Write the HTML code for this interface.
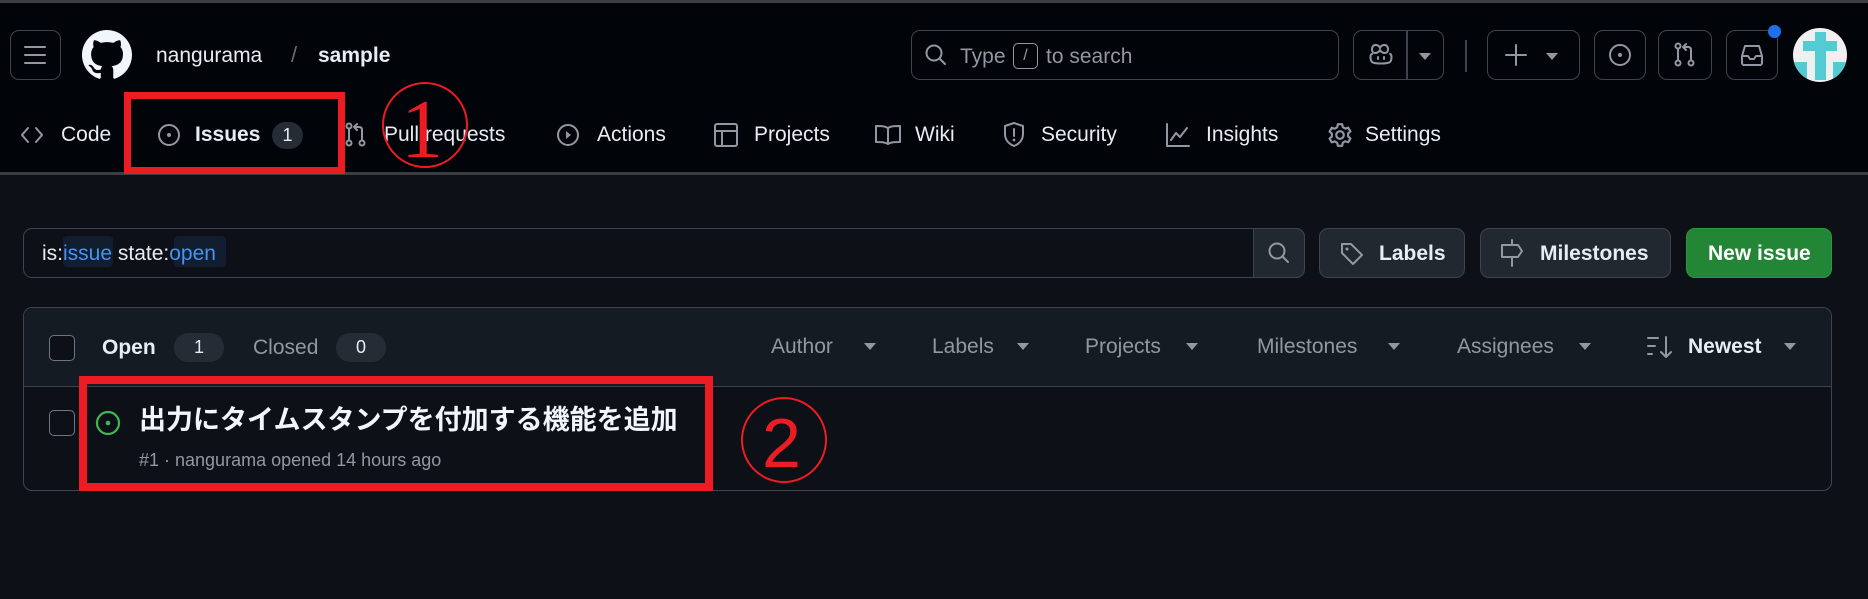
<!DOCTYPE html>
<html><head><meta charset="utf-8">
<style>
*{box-sizing:border-box;margin:0;padding:0}
body{width:1868px;height:599px;background:#0d1117;position:relative;overflow:hidden;font-family:"Liberation Sans","Noto Sans CJK JP",sans-serif;color:#e6edf3}
.a{position:absolute}
.hdr{left:0;top:0;width:1868px;height:173px;background:#010409;border-top:3px solid #3a3d42}
.btn{position:absolute;border:1.5px solid #3d444d;border-radius:9px}
.t{position:absolute;white-space:nowrap;line-height:1}
.nav{font-size:21px;color:#e6edf3;top:124px}
svg{position:absolute;overflow:visible}
.ic{fill:none;stroke:#9198a1;stroke-width:2;stroke-linecap:round;stroke-linejoin:round}
.badge{position:absolute;background:#262c36;border-radius:14px;color:#e6edf3;font-size:18px;text-align:center}
.f{font-size:21px;color:#9198a1;top:336px}
.caret{position:absolute;width:0;height:0;border-left:6px solid transparent;border-right:6px solid transparent;border-top:7px solid #9198a1}
</style></head><body>
<div class="a hdr"></div>
<div class="btn" style="left:10px;top:30px;width:51px;height:50px"></div>
<svg style="left:24px;top:44px" width="24" height="22"><g class="ic" stroke="#9198a1"><path d="M1 3h20M1 11h20M1 19h20"/></g></svg>
<svg style="left:82px;top:30px" width="50" height="50" viewBox="0 0 16 16"><path fill="#f0f6fc" d="M8 0C3.58 0 0 3.58 0 8c0 3.54 2.290 6.53 5.47 7.59.4.07.55-.17.55-.38 0-.19-.01-.82-.01-1.49-2.01.37-2.53-.49-2.690-.94-.09-.23-.48-.94-.82-1.13-.28-.15-.68-.52-.01-.53.63-.01 1.08.58 1.23.82.72 1.21 1.87.87 2.33.66.07-.52.28-.87.51-1.07-1.78-.2-3.64-.89-3.64-3.95 0-.87.31-1.59.82-2.15-.08-.2-.36-1.02.08-2.12 0 0 .67-.21 2.2.82.64-.18 1.32-.27 2-.27.68 0 1.36.09 2 .27 1.53-1.04 2.2-.82 2.2-.82.44 1.1.16 1.92.08 2.12.51.56.82 1.27.82 2.15 0 3.07-1.87 3.75-3.65 3.95.29.25.54.73.54 1.48 0 1.07-.01 1.93-.01 2.2 0 .21.15.46.55.38A8.013 8.013 0 0016 8c0-4.42-3.58-8-8-8z"/></svg>
<div class="t" style="left:156px;top:45px;font-size:21px">nangurama</div>
<div class="t" style="left:291px;top:44px;font-size:22px;color:#656c76">/</div>
<div class="t" style="left:318px;top:45px;font-size:21px;font-weight:bold">sample</div>
<div class="btn" style="left:911px;top:30px;width:428px;height:50px"></div>
<svg style="left:925px;top:44px" width="22" height="22"><g class="ic"><circle cx="9" cy="9" r="7.5"/><path d="M14.5 14.5L20 20"/></g></svg>
<div class="t" style="left:960px;top:46px;font-size:21px;color:#9198a1">Type</div>
<div class="a" style="left:1013px;top:43px;width:25px;height:26px;border:1.5px solid #9198a1;border-radius:5px;color:#9198a1;font-size:16px;text-align:center;line-height:23px">/</div>
<div class="t" style="left:1046px;top:46px;font-size:21px;color:#9198a1">to search</div>
<div class="btn" style="left:1353px;top:30px;width:91px;height:50px"></div>
<div class="a" style="left:1406px;top:31px;width:1.5px;height:48px;background:#3d444d"></div>
<svg style="left:1368px;top:42px" width="26" height="24"><g class="ic" stroke-width="2.2"><path d="M4 12c-2 0-2 6 0 8 3 2 15 2 18 0 2-2 2-8 0-8M7 11c-3 0-4-4-2-7 2-2 6-1 7 2 1-3 5-4 7-2 2 3 1 7-2 7-2 0-4-1-5-3-1 2-3 3-5 3z"/><path d="M10 15v2M16 15v2"/></g></svg>
<div class="caret" style="left:1419px;top:53px;border-top-color:#9198a1"></div>
<div class="a" style="left:1465px;top:40px;width:2px;height:32px;background:#3d444d"></div>
<div class="btn" style="left:1487px;top:30px;width:93px;height:50px"></div>
<svg style="left:1505px;top:44px" width="22" height="22"><g class="ic" stroke-width="2.4"><path d="M11 1v20M1 11h20"/></g></svg>
<div class="caret" style="left:1546px;top:53px"></div>
<div class="btn" style="left:1594px;top:30px;width:52px;height:50px"></div>
<svg style="left:1608px;top:43px" width="24" height="24"><g class="ic"><circle cx="12" cy="12" r="10"/></g><circle cx="12" cy="12" r="2" fill="#9198a1"/></svg>
<div class="btn" style="left:1658px;top:30px;width:54px;height:50px"></div>
<svg style="left:1674px;top:42px" width="24" height="26"><g class="ic"><circle cx="4" cy="21" r="2.5"/><circle cx="4" cy="4" r="2.5"/><circle cx="17" cy="21" r="2.5"/><path d="M4 7v11M17 18V8c0-2-1-3-3-3h-4M12 2l-3 3 3 3"/></g></svg>
<div class="btn" style="left:1726px;top:30px;width:52px;height:50px"></div>
<svg style="left:1740px;top:44px" width="24" height="22"><g class="ic"><path d="M2 12l3-10h14l3 10v7c0 1-1 2-2 2H4c-1 0-2-1-2-2zM2 12h6l2 3h4l2-3h6"/></g></svg>
<div class="a" style="left:1768px;top:25px;width:13px;height:13px;border-radius:50%;background:#1f6feb"></div>
<div class="a" style="left:1793px;top:28px;width:54px;height:54px;border-radius:50%;background:#f0f0f0;overflow:hidden">
<div class="a" style="left:22px;top:4px;width:11px;height:48px;background:#52cbd3"></div>
<div class="a" style="left:10px;top:13px;width:34px;height:10px;background:#52cbd3"></div>
<div class="a" style="left:0;top:34px;width:14px;height:20px;background:#52cbd3"></div>
<div class="a" style="left:40px;top:34px;width:14px;height:20px;background:#52cbd3"></div>
</div>
<svg style="left:21px;top:125px" width="22" height="20"><g class="ic"><path d="M7 3L1 10l6 7M15 3l6 7-6 7"/></g></svg>
<div class="t nav" style="left:61px">Code</div>
<svg style="left:157px;top:123px" width="24" height="24"><g class="ic"><circle cx="12" cy="12" r="10"/></g><circle cx="12" cy="12" r="2" fill="#9198a1"/></svg>
<div class="t nav" style="left:195px;font-weight:bold">Issues</div>
<div class="badge" style="left:272px;top:122px;width:31px;height:27px;line-height:27px">1</div>
<svg style="left:345px;top:122px" width="24" height="26"><g class="ic"><circle cx="4" cy="21" r="2.5"/><circle cx="4" cy="4" r="2.5"/><circle cx="17" cy="21" r="2.5"/><path d="M4 7v11M17 18V8c0-2-1-3-3-3h-4M12 2l-3 3 3 3"/></g></svg>
<div class="t nav" style="left:384px">Pull requests</div>
<svg style="left:556px;top:123px" width="24" height="24"><g class="ic"><circle cx="12" cy="12" r="10"/></g><path d="M10 8l5 4-5 4z" fill="#9198a1"/></svg>
<div class="t nav" style="left:597px">Actions</div>
<svg style="left:714px;top:123px" width="24" height="24"><g class="ic"><rect x="1" y="1" width="22" height="22" rx="2"/><path d="M1 8h22M8 8v15"/></g></svg>
<div class="t nav" style="left:754px">Projects</div>
<svg style="left:875px;top:124px" width="26" height="22"><g class="ic"><path d="M13 4c-3-2-7-2-12-2v16c5 0 9 0 12 2 3-2 7-2 12-2V2c-5 0-9 0-12 2zM13 4v16"/></g></svg>
<div class="t nav" style="left:915px">Wiki</div>
<svg style="left:1003px;top:122px" width="22" height="26"><g class="ic"><path d="M11 1l9 3v8c0 6-4 10-9 12-5-2-9-6-9-12V4z M11 7v7"/></g><circle cx="11" cy="18" r="1.4" fill="#9198a1"/></svg>
<div class="t nav" style="left:1041px">Security</div>
<svg style="left:1166px;top:123px" width="24" height="24"><g class="ic"><path d="M1 1v22h22M5 17l5-7 4 4 7-9"/></g></svg>
<div class="t nav" style="left:1206px">Insights</div>
<svg style="left:1327px;top:122px" width="26" height="26" viewBox="0 0 24 24"><g class="ic"><circle cx="12" cy="12" r="3.5"/><path d="M10 2h4l.6 2.8 2.3 1.3 2.7-.9 2 3.5-2.1 1.9v2.7l2.1 1.9-2 3.5-2.7-.9-2.3 1.3L14 22h-4l-.6-2.8-2.3-1.3-2.7.9-2-3.5 2.1-1.9v-2.7L2.4 8.8l2-3.5 2.7.9 2.3-1.3z"/></g></svg>
<div class="t nav" style="left:1365px">Settings</div>
<div class="a" style="left:0;top:172px;width:1868px;height:3px;background:#3a3d42"></div>
<div class="a" style="left:23px;top:228px;width:1282px;height:50px;border:1.5px solid #3d444d;border-radius:9px;background:#0d1117"></div>
<div class="a" style="left:1253px;top:228px;width:52px;height:50px;border:1.5px solid #3d444d;border-radius:0 9px 9px 0;background:#212830"></div>
<svg style="left:1268px;top:242px" width="22" height="22"><g class="ic"><circle cx="9" cy="9" r="7.5"/><path d="M14.5 14.5L20 20"/></g></svg>
<div class="a" style="left:63px;top:236px;width:50px;height:31px;background:#121d2f;border-radius:4px"></div>
<div class="a" style="left:174px;top:236px;width:52px;height:31px;background:#121d2f;border-radius:4px"></div>
<div class="t" style="left:42px;top:243px;font-size:21px">is:<span style="color:#4493f8">issue</span> state:<span style="color:#4493f8">open</span></div>
<div class="btn" style="left:1319px;top:228px;width:146px;height:50px;background:#212830"></div>
<svg style="left:1340px;top:242px" width="24" height="24"><g class="ic"><path d="M2 2h9l11 11-9 9L2 11z"/></g><circle cx="7" cy="7" r="1.5" fill="#9198a1"/></svg>
<div class="t" style="left:1379px;top:243px;font-size:21px;font-weight:bold">Labels</div>
<div class="btn" style="left:1480px;top:228px;width:191px;height:50px;background:#212830"></div>
<svg style="left:1500px;top:239px" width="24" height="28"><g class="ic"><path d="M12 1v5M12 18v9M2 6h16l4 6-4 6H2z"/></g></svg>
<div class="t" style="left:1540px;top:243px;font-size:21px;font-weight:bold">Milestones</div>
<div class="a" style="left:1686px;top:228px;width:146px;height:50px;background:#238636;border-radius:9px;border:1.5px solid #2a9a3f"></div>
<div class="t" style="left:1708px;top:243px;font-size:21px;font-weight:bold;color:#fff">New issue</div>
<div class="a" style="left:23px;top:307px;width:1809px;height:184px;border:1.5px solid #3d444d;border-radius:9px;overflow:hidden">
<div class="a" style="left:0;top:0;width:1809px;height:79px;background:#151b23;border-bottom:1.5px solid #3d444d"></div>
</div>
<div class="a" style="left:49px;top:335px;width:26px;height:26px;border:1.5px solid #6e7681;border-radius:5px;background:#0d1117"></div>
<div class="t" style="left:102px;top:337px;font-size:21px;font-weight:bold">Open</div>
<div class="badge" style="left:174px;top:333px;width:50px;height:29px;line-height:29px">1</div>
<div class="t f" style="left:253px;top:337px">Closed</div>
<div class="badge" style="left:336px;top:333px;width:50px;height:29px;line-height:29px">0</div>
<div class="t f" style="left:771px">Author</div><div class="caret" style="left:864px;top:343px"></div>
<div class="t f" style="left:932px">Labels</div><div class="caret" style="left:1017px;top:343px"></div>
<div class="t f" style="left:1085px">Projects</div><div class="caret" style="left:1186px;top:343px"></div>
<div class="t f" style="left:1257px">Milestones</div><div class="caret" style="left:1388px;top:343px"></div>
<div class="t f" style="left:1457px">Assignees</div><div class="caret" style="left:1579px;top:343px"></div>
<svg style="left:1647px;top:335px" width="26" height="24"><g class="ic"><path d="M1 3h10M1 11h7M1 19h4M19 2v20M14 17l5 5 5-5"/></g></svg>
<div class="t" style="left:1688px;top:336px;font-size:21px;font-weight:bold">Newest</div><div class="caret" style="left:1784px;top:343px"></div>
<div class="a" style="left:49px;top:410px;width:26px;height:26px;border:1.5px solid #6e7681;border-radius:5px"></div>
<svg style="left:95px;top:410px" width="26" height="26"><circle cx="13" cy="13" r="11" fill="none" stroke="#3fb950" stroke-width="2.2"/><circle cx="13" cy="13" r="2.3" fill="#3fb950"/></svg>
<div class="t" style="left:139px;top:407px;font-size:27px;font-weight:bold;letter-spacing:0;color:#f0f6fc">出力にタイムスタンプを付加する機能を追加</div>
<div class="t" style="left:139px;top:451px;font-size:18px;color:#9198a1">#1 · nangurama opened 14 hours ago</div>
<div class="a" style="left:124px;top:92px;width:221px;height:82px;border:7px solid #ed1c24"></div>
<div class="a" style="left:382px;top:82px;width:86px;height:86px;border:2px solid #ed1c24;border-radius:50%"></div>
<div class="t" style="left:401px;top:88px;font-size:84px;color:#ed1c24;font-family:'Liberation Serif',serif">1</div>
<div class="a" style="left:79px;top:376px;width:634px;height:115px;border:8px solid #ed1c24"></div>
<div class="a" style="left:741px;top:397px;width:86px;height:86px;border:2px solid #ed1c24;border-radius:50%"></div>
<div class="t" style="left:762px;top:408px;font-size:70px;color:#ed1c24">2</div>
</body></html>
